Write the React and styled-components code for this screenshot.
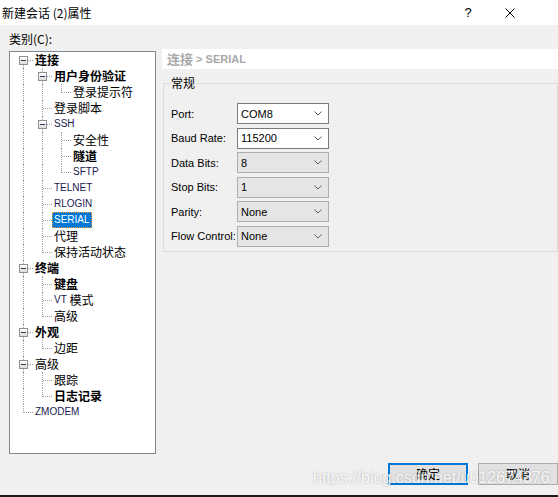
import React from 'react';
import styled, { createGlobalStyle } from 'styled-components';

const CJK = `"Noto Sans CJK SC", sans-serif`;
const LAT = `"Liberation Sans", "Noto Sans CJK SC", sans-serif`;

const Global = createGlobalStyle`
  html, body { margin: 0; padding: 0; background: #f0f0f0; }
  * { box-sizing: border-box; }
`;

const Window = styled.div`
  position: relative;
  width: 558px;
  height: 497px;
  overflow: hidden;
  background: #f0f0f0;
  display: flex;
  flex-direction: column;
  font-family: ${LAT};
  color: #000;
`;

const TitleBar = styled.div`
  height: 25px;
  flex: none;
  background: #fff;
  display: flex;
  align-items: center;
  padding: 0 43px 0 2px;
`;

const Title = styled.div`
  flex: 1;
  font: 12px/16px ${CJK};
`;

const HelpGlyph = styled.div`
  width: 20px;
  text-align: center;
  font: 13px/16px ${LAT};
  margin-right: 27px;
`;

const CloseGlyph = styled.svg`
  width: 10px;
  height: 10px;
  display: block;
`;

const Body = styled.div`
  flex: 1;
  display: flex;
  flex-direction: column;
  padding: 6px 0 0 9px;
`;

const Main = styled.div`
  display: flex;
  gap: 6px;
`;

const LeftCol = styled.div`
  width: 147px;
  flex: none;
  display: flex;
  flex-direction: column;
`;

const CategoryLabel = styled.div`
  height: 16px;
  font: 12px/16px ${CJK};
`;

const TreeBox = styled.div`
  margin-top: 4px;
  height: 403px;
  border: 1px solid #828790;
  background: #fff;
  overflow: hidden;
`;

const Row = styled.div`
  display: flex;
  height: 16px;
`;

const vTop = { full: '0', upper: '0', lower: '8px', none: '0' };
const vBottom = { full: '0', upper: '7px', lower: '0', none: '0' };

const Guide = styled.span`
  position: relative;
  flex: none;
  width: ${p => p.$w}px;
  height: 16px;
  &::before {
    content: '';
    position: absolute;
    left: 13px;
    top: ${p => vTop[p.$v]};
    bottom: ${p => vBottom[p.$v]};
    border-left: 1px dotted #a0a0a0;
    display: ${p => (p.$v === 'none' ? 'none' : 'block')};
  }
  &::after {
    content: '';
    position: absolute;
    top: 8px;
    left: 14px;
    right: 0;
    border-top: 1px dotted #a0a0a0;
    display: ${p => (p.$h ? 'block' : 'none')};
  }
`;

const Expander = styled.span`
  position: absolute;
  z-index: 1;
  left: 9px;
  top: 4px;
  width: 9px;
  height: 9px;
  border: 1px solid #8f8f8f;
  background: linear-gradient(#ffffff, #dcdcdc);
  display: flex;
  align-items: center;
  justify-content: center;
`;

const Minus = styled.span`
  width: 5px;
  height: 1px;
  background: #2a3658;
`;

const ItemLabel = styled.span`
  display: flex;
  align-items: center;
  height: 16px;
  padding: 0 1px;
  border: 1px ${p => (p.$sel ? 'dotted #ff9a30' : 'solid transparent')};
  background: ${p => (p.$sel ? '#0078d7' : 'transparent')};
  color: ${p => (p.$sel ? '#fff' : '#000')};
  font: ${p => (p.$bold ? 700 : 400)} 12px/14px ${CJK};
  white-space: nowrap;
`;

const TreeLatin = styled.span`
  font: ${p => (p.$bold ? 700 : 400)} 10px/14px ${LAT};
  color: ${p => (p.$sel ? '#fff' : '#1a1a50')};
  white-space: pre;
`;

const RightCol = styled.div`
  flex: 1;
  display: flex;
  flex-direction: column;
  margin-top: 18px;
`;

const Header = styled.div`
  height: 20px;
  background: #fff;
  padding-left: 5px;
  display: flex;
  align-items: center;
  color: #a8a8a8;
  font-weight: 700;
`;

const HeaderCJK = styled.span`
  font: 700 13px/16px ${CJK};
`;

const HeaderLatin = styled.span`
  font: 700 11px/16px ${LAT};
  white-space: pre;
`;

const Group = styled.div`
  position: relative;
  margin: 14px 0 0 1px;
  border: 1px solid #dcdcdc;
  padding: 19px 0 4.5px 7px;
  display: flex;
  flex-direction: column;
  gap: 3.5px;
`;

const Legend = styled.span`
  position: absolute;
  top: -9px;
  left: 6px;
  padding: 0 1px;
  background: #f0f0f0;
  font: 12px/16px ${CJK};
`;

const Field = styled.div`
  display: grid;
  grid-template-columns: 66px 92px;
  align-items: center;
`;

const FieldLabel = styled.span`
  font: 11px/14px ${LAT};
  white-space: nowrap;
`;

const Combo = styled.div`
  height: 21px;
  display: flex;
  align-items: center;
  padding-left: 3px;
  border: 1px solid ${p => (p.$edit ? '#7a7a7a' : '#adadad')};
  background: ${p => (p.$edit ? '#fff' : '#e5e5e5')};
  font: 11px/14px ${LAT};
`;

const ComboText = styled.span`
  flex: 1;
`;

const Chevron = styled.svg`
  width: 8px;
  height: 5px;
  margin-right: 6px;
  display: block;
`;

const Footer = styled.div`
  display: flex;
  justify-content: flex-end;
  gap: 10px;
  margin-top: 9px;
`;

const Button = styled.div`
  width: 80px;
  height: 22px;
  display: flex;
  align-items: center;
  justify-content: center;
  background: #e1e1e1;
  border: ${p => (p.$primary ? '2px solid #0078d7' : '1px solid #adadad')};
  font: 12px/16px ${CJK};
`;

const BottomLine = styled.div`
  height: 2px;
  flex: none;
  background: #1b1b1b;
`;

const Watermark = styled.div`
  position: absolute;
  left: 313px;
  top: 469px;
  font: 16px/18px ${LAT};
  color: rgba(255, 255, 255, 0.92);
  text-shadow: 0 0 2px rgba(0, 0, 0, 0.3);
  pointer-events: none;
  white-space: nowrap;
`;

const TREE = [
  {
    t: '连接', b: true, c: [
      { t: '用户身份验证', b: true, c: [{ t: '登录提示符' }] },
      { t: '登录脚本' },
      { t: 'SSH', c: [{ t: '安全性' }, { t: '隧道', b: true }, { t: 'SFTP' }] },
      { t: 'TELNET' },
      { t: 'RLOGIN' },
      { t: 'SERIAL', sel: true },
      { t: '代理' },
      { t: '保持活动状态' },
    ],
  },
  { t: '终端', b: true, c: [{ t: '键盘', b: true }, { t: 'VT 模式' }, { t: '高级' }] },
  { t: '外观', b: true, c: [{ t: '边距' }] },
  { t: '高级', c: [{ t: '跟踪' }, { t: '日志记录', b: true }] },
  { t: 'ZMODEM' },
];

function flatten(nodes, anc, out, isRoot) {
  nodes.forEach((n, i) => {
    const last = i === nodes.length - 1;
    out.push({ ...n, anc, last, firstRoot: isRoot && i === 0 });
    if (n.c) flatten(n.c, [...anc, !last], out, false);
  });
  return out;
}

const ROWS = flatten(TREE, [], [], true);

function Mixed({ text, bold, sel }) {
  const parts = text.split(/([A-Za-z0-9 ]+)/).filter(Boolean);
  return parts.map((p, i) =>
    /^[A-Za-z0-9 ]+$/.test(p) ? (
      <TreeLatin key={i} $bold={bold} $sel={sel}>{p}</TreeLatin>
    ) : (
      <React.Fragment key={i}>{p}</React.Fragment>
    )
  );
}

const FIELDS = [
  { label: 'Port:', value: 'COM8', edit: true },
  { label: 'Baud Rate:', value: '115200', edit: true },
  { label: 'Data Bits:', value: '8' },
  { label: 'Stop Bits:', value: '1' },
  { label: 'Parity:', value: 'None' },
  { label: 'Flow Control:', value: 'None' },
];

export default function App() {
  return (
    <>
      <Global />
      <Window>
        <TitleBar>
          <Title>新建会话 (2)属性</Title>
          <HelpGlyph>?</HelpGlyph>
          <CloseGlyph viewBox="0 0 10 10">
            <path d="M0.5 0.5 L9.5 9.5 M9.5 0.5 L0.5 9.5" stroke="#000" strokeWidth="1" fill="none" />
          </CloseGlyph>
        </TitleBar>
        <Body>
          <Main>
            <LeftCol>
              <CategoryLabel>类别(C):</CategoryLabel>
              <TreeBox>
                {ROWS.map((r, idx) => (
                  <Row key={idx}>
                    {r.anc.map((cont, j) => (
                      <Guide key={j} $w={19} $v={cont ? 'full' : 'none'} />
                    ))}
                    <Guide $w={23} $h $v={r.firstRoot ? 'lower' : r.last ? 'upper' : 'full'}>
                      {r.c && (
                        <Expander>
                          <Minus />
                        </Expander>
                      )}
                    </Guide>
                    <ItemLabel $bold={r.b} $sel={r.sel}>
                      <Mixed text={r.t} bold={r.b} sel={r.sel} />
                    </ItemLabel>
                  </Row>
                ))}
              </TreeBox>
            </LeftCol>
            <RightCol>
              <Header>
                <HeaderCJK>连接</HeaderCJK>
                <HeaderLatin> &gt; SERIAL</HeaderLatin>
              </Header>
              <Group>
                <Legend>常规</Legend>
                {FIELDS.map(f => (
                  <Field key={f.label}>
                    <FieldLabel>{f.label}</FieldLabel>
                    <Combo $edit={f.edit}>
                      <ComboText>{f.value}</ComboText>
                      <Chevron viewBox="0 0 8 5">
                        <path d="M0.5 0.5 L4 4 L7.5 0.5" stroke="#606060" strokeWidth="1" fill="none" />
                      </Chevron>
                    </Combo>
                  </Field>
                ))}
              </Group>
            </RightCol>
          </Main>
          <Footer>
            <Button $primary>确定</Button>
            <Button>取消</Button>
          </Footer>
        </Body>
        <BottomLine />
        <Watermark>https://blog.csdn.net/u012674376</Watermark>
      </Window>
    </>
  );
}
